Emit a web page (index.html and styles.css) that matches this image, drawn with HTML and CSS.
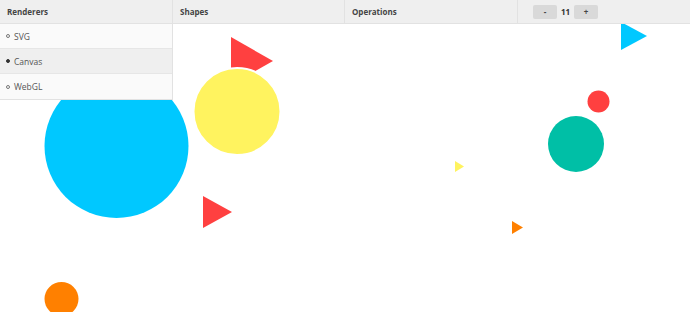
FILE: index.html
```html
<!DOCTYPE html>
<html>
<head>
<meta charset="utf-8">
<link rel="stylesheet" href="styles.css">
</head>
<body>
<div class="header">
  <div class="col"><span class="title">Renderers</span></div>
  <div class="col"><span class="title">Shapes</span></div>
  <div class="col"><span class="title">Operations</span></div>
  <div class="col counter">
    <button class="btn">-</button>
    <span class="count">11</span>
    <button class="btn">+</button>
  </div>
</div>
<div class="stage">
  <svg class="canvas" width="690" height="288" viewBox="0 24 690 288">
    <circle cx="116.5" cy="146" r="72" fill="#00c8ff"/>
    <polygon points="231,37 231,85 273,61" fill="#ff4040"/>
    <circle cx="237" cy="111.5" r="43.5" fill="#fff35f" stroke="#ffffff" stroke-width="2"/>
    <polygon points="203,196 203,228 232,212" fill="#ff4040"/>
    <polygon points="621,22 621,50 647,36" fill="#00c8ff"/>
    <circle cx="598.5" cy="101.5" r="11" fill="#ff4040"/>
    <circle cx="576" cy="144" r="28" fill="#00bfa6"/>
    <polygon points="455,161 455,172 464,166.5" fill="#fff35f"/>
    <polygon points="512,221 512,234 523,227.5" fill="#ff8000"/>
    <circle cx="61.5" cy="299" r="17" fill="#ff8000"/>
  </svg>
  <ul class="menu">
    <li class="item"><span class="dot"></span>SVG</li>
    <li class="item active"><span class="dot"></span>Canvas</li>
    <li class="item"><span class="dot"></span>WebGL</li>
  </ul>
</div>
</body>
</html>
```

FILE: styles.css
```css
* { box-sizing: border-box; }
html, body {
  margin: 0;
  padding: 0;
  width: 690px;
  height: 312px;
  overflow: hidden;
  background: #ffffff;
  font-family: "Open Sans", "Liberation Sans", sans-serif;
}
.header {
  display: grid;
  grid-template-columns: 173px 172px 173px 172px;
  height: 24px;
  background: #efefef;
  border-bottom: 1px solid #e2e2e2;
  position: relative;
  z-index: 2;
}
.col {
  display: flex;
  align-items: center;
  padding-left: 7px;
  border-right: 1px solid #e2e2e2;
}
.col:last-child { border-right: none; }
.title {
  font-size: 8px;
  font-weight: 700;
  color: #444;
}
.counter {
  padding-left: 15px;
  gap: 2px;
}
.btn {
  width: 24px;
  height: 14px;
  border: none;
  background: #d9d9d9;
  border-radius: 2px;
  font-family: "Open Sans", "Liberation Sans", sans-serif;
  font-size: 8px;
  font-weight: 700;
  color: #444;
  padding: 0;
  line-height: 14px;
}
.count {
  font-size: 8px;
  font-weight: 700;
  color: #333;
  padding: 0 2px;
}
.stage {
  position: relative;
  height: 288px;
}
.canvas {
  display: block;
}
.menu {
  position: absolute;
  left: 0;
  top: 0;
  width: 173px;
  margin: 0;
  padding: 0;
  list-style: none;
  background: #fafafa;
  border-right: 1px solid #e2e2e2;
  border-bottom: 1px solid #e2e2e2;
}
.item {
  display: flex;
  align-items: center;
  height: 25px;
  padding-left: 6px;
  font-size: 8.5px;
  color: #555;
  border-bottom: 1px solid #e6e6e6;
}
.item:last-child { border-bottom: none; }
.item.active { background: #efefef; }
.dot {
  width: 4px;
  height: 4px;
  border-radius: 50%;
  border: 1px solid #777;
  margin-right: 4px;
}
.item.active .dot {
  background: #333;
  border-color: #333;
}
```
